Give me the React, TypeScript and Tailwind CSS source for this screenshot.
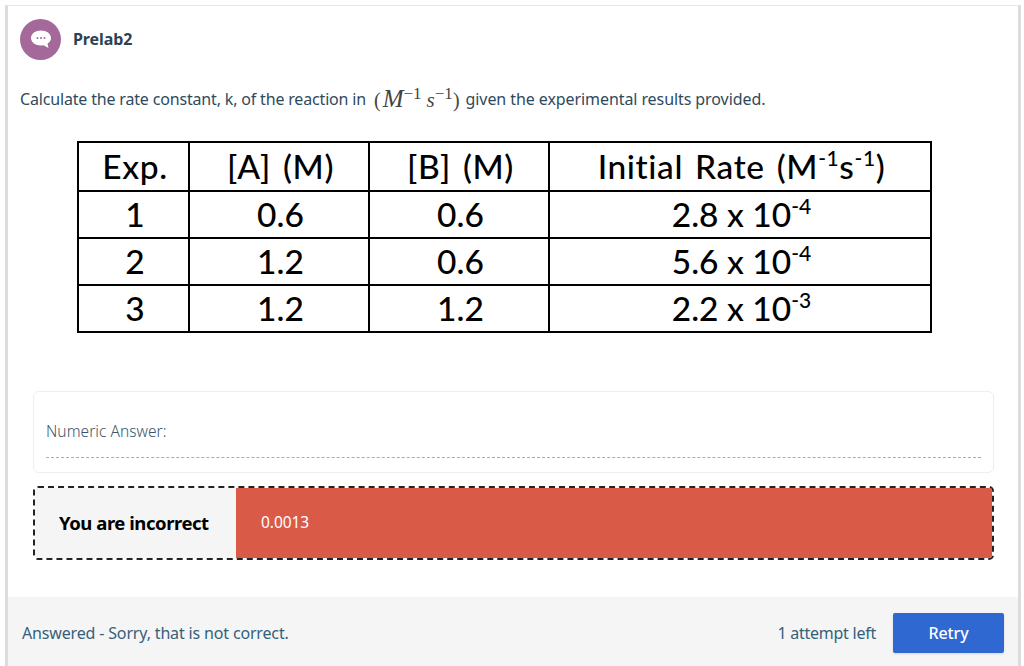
const rows = [
  { exp: "1", a: "0.6", b: "0.6", rate: "2.8 x 10", pow: "-4" },
  { exp: "2", a: "1.2", b: "0.6", rate: "5.6 x 10", pow: "-4" },
  { exp: "3", a: "1.2", b: "1.2", rate: "2.2 x 10", pow: "-3" },
];

const cell = "border-2 border-black p-0 pl-[3px] text-center align-middle font-medium";
const sup = "relative top-[-1px] align-super text-[21px] leading-[0]";

const ChatIcon = () => (
  <div className="flex h-[41px] w-[41px] items-center justify-center rounded-full bg-[#a4689a]">
    <svg width="22" height="21" viewBox="0 0 22 21">
      <path d="M11 1.5C5.5 1.5 1 4.6 1 9s4.5 7.5 10 7.5c.9 0 1.8-.1 2.6-.3l4.900 2.800-1-4.300C19.600 13.400 21 11.400 21 9c0-4.400-4.500-7.500-10-7.500z" fill="#fff" />
      <circle cx="7.500" cy="9" r="1" fill="#a4689a" />
      <circle cx="11" cy="9" r="1" fill="#a4689a" />
      <circle cx="14.500" cy="9" r="1" fill="#a4689a" />
    </svg>
  </div>
);

export default function App() {
  return (
    <div className="h-[666px] w-[1024px] overflow-hidden bg-white pt-[5px] pl-[5px] font-['Noto_Sans',sans-serif] text-[#2f4a5c]">
      <div className="flex h-[661px] w-[1016px] flex-col border-x-[3px] border-t border-x-[#dcdcdc] border-t-[#e8e8e8]">
        <div className="flex items-center gap-[12px] pt-[13px] pl-[12px]">
          <ChatIcon />
          <span className="relative -top-px text-[16px] font-bold tracking-[-0.1px] text-[#2c4254]">Prelab2</span>
        </div>

        <div className="mt-[26px] flex h-[26px] items-center pl-[12px] text-[16px] tracking-[-0.17px] text-[#2f4a5c]">
          <span>Calculate the rate constant, k, of the reaction in</span>
          <span className="mr-[6px] ml-[8px] flex items-baseline font-['Liberation_Serif',serif] text-[20px] tracking-normal text-[#444]">
            (<i className="ml-[2px] text-[25px]">M</i>
            <sup className="text-[17px]">−1</sup>
            <i className="ml-[5px] text-[21px]">s</i>
            <sup className="text-[17px]">−1</sup>)
          </span>
          <span className="tracking-[-0.08px]">given the experimental results provided.</span>
        </div>

        <table className="mt-[29px] ml-[69px] h-[191px] w-[853px] table-fixed border-collapse font-['Lato',sans-serif] text-[33.500px] leading-none text-black">
          <colgroup>
            <col className="w-[111px]" />
            <col className="w-[180px]" />
            <col className="w-[180px]" />
            <col className="w-[382px]" />
          </colgroup>
          <thead>
            <tr className="h-[49px] tracking-[0.6px] [word-spacing:3px]">
              <th className={cell}>Exp.</th>
              <th className={cell}>[A] (M)</th>
              <th className={cell}>[B] (M)</th>
              <th className={cell}>
                Initial Rate (M<span className={sup}>-1</span>s<span className={sup}>-1</span>)
              </th>
            </tr>
          </thead>
          <tbody>
            {rows.map((r) => (
              <tr key={r.exp} className="h-[47px]">
                <td className={cell}>{r.exp}</td>
                <td className={cell}>{r.a}</td>
                <td className={cell}>{r.b}</td>
                <td className={cell}>
                  {r.rate}
                  <span className={sup}>{r.pow}</span>
                </td>
              </tr>
            ))}
          </tbody>
        </table>

        <div className="mt-[58px] ml-[25px] flex h-[82px] w-[961px] flex-col rounded-[6px] border border-[#eeeeee] px-[12px]">
          <div className="mt-[28px] text-[15.500px] font-light tracking-[0.05px] text-[#3d5569]">Numeric Answer:</div>
          <div className="mt-[14px] border-t border-dashed border-[#a5adb4]" />
        </div>

        <div className="mt-[13px] ml-[25px] flex h-[74px] w-[961px] overflow-hidden rounded-[5px] border-2 border-dashed border-[#222]">
          <div className="flex w-[201px] items-center bg-[#f5f5f5] pl-[24px] text-[18.500px] font-bold tracking-[-0.45px] text-black">
            You are incorrect
          </div>
          <div className="flex flex-1 items-center bg-[#d95a47] pl-[25px] text-[15.500px] tracking-[-0.05px] text-white">0.0013</div>
        </div>

        <div className="mt-[37px] flex flex-1 items-center bg-[#f5f5f5] px-[14px] pt-[2px] text-[16px] tracking-[-0.16px] text-[#35607a]">
          <span>Answered - Sorry, that is not correct.</span>
          <span className="mr-[17px] ml-auto tracking-[-0.25px]">1 attempt left</span>
          <button className="h-[40px] w-[111px] rounded-[2px] bg-[#2f68d1] pt-[1px] text-[16px] font-medium text-white shadow-sm">
            Retry
          </button>
        </div>
      </div>
    </div>
  );
}
